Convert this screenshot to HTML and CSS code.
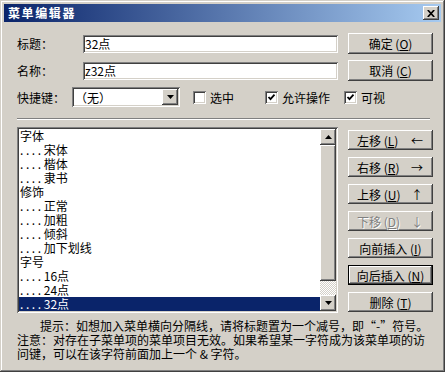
FILE: index.html
```html
<!DOCTYPE html>
<html lang="zh-CN">
  <head>
    <meta charset="UTF-8" />
    <title>菜单编辑器</title>
    <link rel="stylesheet" href="styles.css">
  </head>
  <body>
    <div class="window">
      <div class="titlebar">
        <span class="title">菜单编辑器</span>
        <button class="close">
          <svg width="8" height="7" viewBox="0 0 8 7"><path d="M0.8 0l6.4 7M7.2 0l-6.4 7" stroke="#000" stroke-width="1.7" fill="none"/></svg>
        </button>
      </div>
      <div class="content">
        <div class="row">
          <label class="label" for="caption">标题：</label>
          <input class="edit" id="caption" value="32点" />
          <button class="btn">确定 (<u>O</u>)</button>
        </div>
        <div class="row">
          <label class="label" for="name">名称：</label>
          <input class="edit" id="name" value="z32点" />
          <button class="btn">取消 (<u>C</u>)</button>
        </div>
        <div class="row keys">
          <span class="label short">快捷键：</span>
          <div class="combo">
            <span class="combo-text">（无）</span>
            <span class="drop"><svg width="7" height="4" viewBox="0 0 7 4"><path d="M0 0h7l-3.5 4z" fill="#000"/></svg></span>
          </div>
          <label class="check c1"><span class="box"></span>选中</label>
          <label class="check c2"><span class="box on"><svg width="9" height="9" viewBox="0 0 9 9"><path d="M1.5 4l2 2.2 4-4.5" stroke="#000" stroke-width="1.8" fill="none"/></svg></span>允许操作</label>
          <label class="check c3"><span class="box on"><svg width="9" height="9" viewBox="0 0 9 9"><path d="M1.5 4l2 2.2 4-4.5" stroke="#000" stroke-width="1.8" fill="none"/></svg></span>可视</label>
        </div>
        <div class="sep"></div>
        <div class="main">
          <div class="list">
            <ul class="items">
              <li>字体</li>
              <li><span class="dots">....</span>宋体</li>
              <li><span class="dots">....</span>楷体</li>
              <li><span class="dots">....</span>隶书</li>
              <li>修饰</li>
              <li><span class="dots">....</span>正常</li>
              <li><span class="dots">....</span>加粗</li>
              <li><span class="dots">....</span>倾斜</li>
              <li><span class="dots">....</span>加下划线</li>
              <li>字号</li>
              <li><span class="dots">....</span>16点</li>
              <li><span class="dots">....</span>24点</li>
              <li class="selected"><span class="dots">....</span>32点</li>
            </ul>
            <div class="scroll">
              <span class="arrow"><svg width="7" height="4" viewBox="0 0 7 4"><path d="M3.5 0l3.5 4h-7z" fill="#000"/></svg></span>
              <span class="thumb"></span>
              <span class="track"></span>
              <span class="arrow"><svg width="7" height="4" viewBox="0 0 7 4"><path d="M0 0h7l-3.5 4z" fill="#000"/></svg></span>
            </div>
          </div>
          <div class="side">
            <button class="btn move"><span>左移 (<u>L</u>)</span><span>←</span></button>
            <button class="btn move"><span>右移 (<u>R</u>)</span><span>→</span></button>
            <button class="btn move"><span>上移 (<u>U</u>)</span><span>↑</span></button>
            <button class="btn move disabled"><span>下移 (<u>D</u>)</span><span>↓</span></button>
            <button class="btn">向前插入 (<u>I</u>)</button>
            <button class="btn default">向后插入 (<u>N</u>)</button>
            <button class="btn">删除 (<u>T</u>)</button>
          </div>
        </div>
        <div class="hint">
          <div class="first">提示：如想加入菜单横向分隔线，请将标题置为一个减号，即<span class="quote">“</span>-<span class="quote">”</span>符号。</div>
          <div>注意：对存在子菜单项的菜单项目无效。如果希望某一字符成为该菜单项的访</div>
          <div>问键，可以在该字符前面加上一个 &amp; 字符。</div>
        </div>
      </div>
    </div>
  </body>
</html>
```

FILE: styles.css
```css
* {
  box-sizing: border-box;
}
body {
  margin: 0;
  background-color: #d4d0c8;
  font-family: "Noto Sans CJK SC", "Liberation Sans", sans-serif;
  font-size: 12px;
  color: #000;
}
.window {
  width: 445px;
  height: 372px;
  padding: 4px;
  box-shadow: inset -1px -1px #404040, inset 1px 1px #d4d0c8,
    inset -2px -2px #808080, inset 2px 2px #fff;
}
.titlebar {
  height: 18px;
  display: flex;
  align-items: center;
  justify-content: space-between;
  padding: 0 2px 0 4px;
  background: linear-gradient(to right, #0a246a, #a6caf0);
}
.title {
  color: #fff;
  font-weight: bold;
  letter-spacing: 1.6px;
  line-height: 18px;
}
.close {
  width: 16px;
  height: 14px;
  padding: 0;
  border: 0;
  background-color: #d4d0c8;
  display: flex;
  align-items: center;
  justify-content: center;
  box-shadow: inset -1px -1px #404040, inset 1px 1px #fff,
    inset -2px -2px #808080;
}
.content {
  padding: 11px 8px 0 13px;
}
.row {
  display: flex;
  align-items: center;
  height: 21px;
}
.row + .row {
  margin-top: 6px;
}
.label {
  width: 66px;
  flex-shrink: 0;
}
.label.short {
  width: 55px;
}
.edit {
  width: 255px;
  height: 18px;
  border: 0;
  padding: 0 2px;
  font: inherit;
  background-color: #fff;
  box-shadow: inset 1px 1px #808080, inset -1px -1px #fff,
    inset 2px 2px #404040, inset -2px -2px #d4d0c8;
}
.btn {
  width: 85px;
  height: 21px;
  margin-left: 10px;
  padding: 0;
  border: 0;
  font: inherit;
  color: #000;
  background-color: #d4d0c8;
  box-shadow: inset -1px -1px #404040, inset 1px 1px #fff,
    inset -2px -2px #808080;
}
.btn u {
  text-underline-offset: 1px;
}
.keys {
  margin-top: 7px;
  height: 20px;
}
.combo {
  width: 108px;
  height: 20px;
  display: flex;
  align-items: center;
  justify-content: space-between;
  padding: 2px;
  background-color: #fff;
  box-shadow: inset 1px 1px #808080, inset -1px -1px #fff,
    inset 2px 2px #404040, inset -2px -2px #d4d0c8;
}
.combo-text {
  padding-left: 1px;
}
.drop,
.arrow {
  width: 16px;
  height: 16px;
  display: flex;
  align-items: center;
  justify-content: center;
  background-color: #d4d0c8;
  box-shadow: inset -1px -1px #404040, inset 1px 1px #fff,
    inset -2px -2px #808080;
}
.check {
  display: flex;
  align-items: center;
  gap: 4px;
}
.c1 {
  margin-left: 13px;
}
.c2 {
  margin-left: 31px;
}
.c3 {
  margin-left: 14px;
}
.box {
  width: 13px;
  height: 13px;
  display: flex;
  align-items: center;
  justify-content: center;
  background-color: #fff;
  box-shadow: inset 1px 1px #808080, inset -1px -1px #fff,
    inset 2px 2px #404040, inset -2px -2px #d4d0c8;
}
.sep {
  width: 413px;
  height: 2px;
  margin-top: 11px;
  border-top: 1px solid #808080;
  border-bottom: 1px solid #fff;
}
.main {
  display: flex;
  margin-top: 7px;
}
.list {
  width: 321px;
  height: 186px;
  padding: 2px;
  display: flex;
  box-shadow: inset 1px 1px #808080, inset -1px -1px #fff,
    inset 2px 2px #404040, inset -2px -2px #d4d0c8;
}
.items {
  flex: 1;
  margin: 0;
  padding: 0;
  list-style: none;
  background-color: #fff;
}
.items li {
  height: 14px;
  line-height: 14px;
  padding-left: 1px;
  white-space: nowrap;
}
.items .selected {
  background-color: #0a246a;
  color: #fff;
}
.dots {
  letter-spacing: 2.6px;
}
.scroll {
  width: 16px;
  display: flex;
  flex-direction: column;
}
.thumb {
  height: 136px;
  background-color: #d4d0c8;
  box-shadow: inset -1px -1px #404040, inset 1px 1px #fff,
    inset -2px -2px #808080;
}
.track {
  flex: 1;
  background: repeating-conic-gradient(#fff 0 25%, #d4d0c8 0 50%) 0 0 / 2px 2px;
}
.side {
  display: flex;
  flex-direction: column;
  gap: 7px;
  padding-top: 3px;
}
.side .btn {
  height: 20px;
}
.move {
  display: flex;
  align-items: center;
  justify-content: space-between;
  padding: 0 10px 0 9px;
}
.disabled {
  color: #808080;
  text-shadow: 1px 1px #fff;
}
.default {
  box-shadow: inset 0 0 0 1px #000, inset -2px -2px #404040,
    inset 2px 2px #fff, inset -3px -3px #808080;
}
.hint {
  margin-top: 6px;
  line-height: 14px;
  white-space: nowrap;
}
.hint .first {
  padding-left: 23px;
}
.quote {
  display: inline-block;
  width: 12px;
  text-align: center;
}
```
